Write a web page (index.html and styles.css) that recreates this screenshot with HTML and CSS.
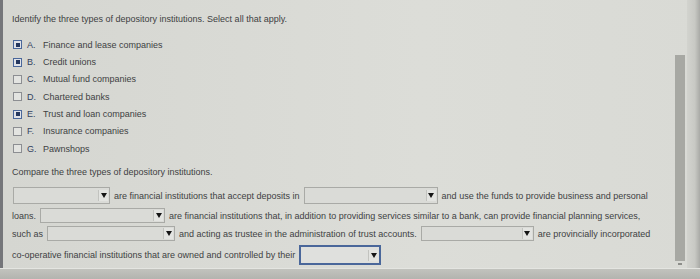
FILE: index.html
```html
<!DOCTYPE html>
<html lang="en">

<head>
    <meta charset="UTF-8">
    <meta name="viewport" content="width=device-width, initial-scale=1.0">
    <title>Depository institutions</title>
    <link rel="stylesheet" href="styles.css">
</head>

<body>
    <div class="screen">
        <div class="frame">
            <main class="question">
                <p class="prompt">Identify the three types of depository institutions. Select all that apply.</p>

                <ul class="options">
                    <li class="option"><span class="box checked"></span><span class="letter">A.</span>Finance and lease companies</li>
                    <li class="option"><span class="box checked"></span><span class="letter">B.</span>Credit unions</li>
                    <li class="option"><span class="box"></span><span class="letter">C.</span>Mutual fund companies</li>
                    <li class="option"><span class="box"></span><span class="letter">D.</span>Chartered banks</li>
                    <li class="option"><span class="box checked"></span><span class="letter">E.</span>Trust and loan companies</li>
                    <li class="option"><span class="box"></span><span class="letter">F.</span>Insurance companies</li>
                    <li class="option"><span class="box"></span><span class="letter">G.</span>Pawnshops</li>
                </ul>

                <p class="prompt compare">Compare the three types of depository institutions.</p>

                <div class="fill">
                    <div class="line line-1">
                        <span class="select w-97"><span class="arrow"></span></span>
                        <span>are financial institutions that accept deposits in</span>
                        <span class="select w-134"><span class="arrow"></span></span>
                        <span>and use the funds to provide business and personal</span>
                    </div>
                    <div class="line line-2">
                        <span>loans.</span>
                        <span class="select w-125"><span class="arrow"></span></span>
                        <span>are financial institutions that, in addition to providing services similar to a bank, can provide financial planning services,</span>
                    </div>
                    <div class="line line-3">
                        <span>such as</span>
                        <span class="select w-128"><span class="arrow"></span></span>
                        <span>and acting as trustee in the administration of trust accounts.</span>
                        <span class="select w-113"><span class="arrow"></span></span>
                        <span>are provincially incorporated</span>
                    </div>
                    <div class="line line-4">
                        <span>co-operative financial institutions that are owned and controlled by their</span>
                        <span class="select focused w-82"><span class="arrow"></span></span>
                    </div>
                </div>
            </main>

            <div class="scrollbar">
                <div class="thumb"></div>
                <div class="scroll-arrow"></div>
            </div>
            <div class="edge"></div>
        </div>
        <footer class="bottom"></footer>
    </div>
</body>

</html>
```

FILE: styles.css
```css
:root {
    --bg: #d8d9d4;
    --text: #404142;
    --navy: #24375f;
    --blue: #4a679a;
    --line: #a9aaa6;
}

body {
    font-family: "Liberation Sans", Arial, sans-serif;
    font-size: 9px;
    margin: 0;
    padding: 0;
    background-color: var(--bg);
    color: var(--text);
    overflow: hidden;
}

.screen {
    width: 700px;
    height: 279px;
    display: flex;
    flex-direction: column;
}

.frame {
    display: flex;
    height: 268px;
    border-left: 3px solid #75767a;
    background: linear-gradient(90deg, #d5d6d1, #dcddd8 60%, #d9dad5);
}

.question {
    flex: 1;
    padding: 14px 0 0 9px;
}

.prompt {
    margin: 0;
    line-height: 11px;
}

.options {
    list-style-type: none;
    margin: 11px 0 0 0;
    padding: 0;
}

.option {
    display: flex;
    align-items: center;
    height: 17.35px;
    padding-left: 1px;
}

.box {
    width: 7px;
    height: 7px;
    border: 1px solid #8c8e92;
    background-color: #e3e4e1;
    margin-right: 5px;
    display: flex;
    align-items: center;
    justify-content: center;
}

.box.checked {
    border-color: var(--blue);
    background-color: #dfe2e9;
}

.box.checked::after {
    content: "";
    width: 4px;
    height: 4px;
    background-color: var(--navy);
}

.letter {
    width: 16px;
    color: #33425f;
}

.compare {
    margin-top: 10px;
}

.fill {
    margin-top: 9px;
}

.line {
    display: flex;
    align-items: center;
    gap: 4px;
    white-space: nowrap;
}

.line-1 {
    height: 17px;
    padding-left: 1px;
}

.line-2 {
    height: 17px;
    margin-top: 3px;
}

.line-3 {
    height: 17px;
    margin-top: 1px;
}

.line-4 {
    height: 20px;
    margin-top: 3px;
}

.select {
    height: 15px;
    border: 1px solid var(--line);
    background-color: #dadbd7;
    display: flex;
    justify-content: flex-end;
    align-items: center;
    box-sizing: border-box;
    padding-right: 1px;
}

.line-1 .select {
    height: 17px;
}

.select.focused {
    height: 20px;
    border: 2px solid var(--blue);
    background-color: #dfe0dd;
}

.arrow {
    width: 9px;
    height: 11px;
    background-color: #e3e4e1;
    border-left: 1px solid #c2c3bf;
    display: flex;
    align-items: center;
    justify-content: center;
}

.arrow::after {
    content: "";
    border-left: 3px solid transparent;
    border-right: 3px solid transparent;
    border-top: 5px solid #151515;
}

.w-82 { width: 82px; }
.w-97 { width: 97px; }
.w-113 { width: 113px; }
.w-125 { width: 125px; }
.w-128 { width: 128px; }
.w-134 { width: 134px; }

.scrollbar {
    width: 10px;
    margin-right: 2px;
    display: flex;
    flex-direction: column;
    align-items: center;
    padding-top: 55px;
}

.thumb {
    width: 10px;
    height: 206px;
    background-color: #a7a8a3;
}

.scroll-arrow {
    margin-top: 2px;
    width: 4px;
    height: 2px;
    background-color: #8d8e8a;
}

.edge {
    width: 13px;
    background: linear-gradient(90deg, #d2d3ce, #c8c9c4 60%, #a9aaa6);
}

.bottom {
    flex: 1;
    border-top: 1px solid #e4e5e1;
    background: linear-gradient(180deg, #c2c3be, #b3b4af);
}
```
